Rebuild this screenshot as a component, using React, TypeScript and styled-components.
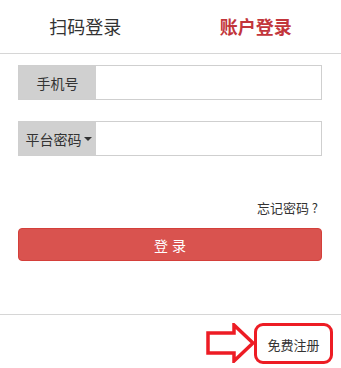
import React from "react";
import styled, { createGlobalStyle } from "styled-components";

const Global = createGlobalStyle`
  html, body { margin: 0; padding: 0; background: #fff; }
  body { font-family: "Noto Sans CJK SC", "Noto Sans", sans-serif; color: #333; }
  * { box-sizing: border-box; }
`;

const Page = styled.div`
  width: 341px;
  height: 368px;
  display: flex;
  flex-direction: column;
  background: #fff;
`;

const Tabs = styled.div`
  display: flex;
  height: 54px;
  border-bottom: 1px solid #d6d6d6;
`;

const Tab = styled.div<{ $active?: boolean }>`
  flex: 1;
  display: flex;
  align-items: center;
  justify-content: center;
  font-size: 18px;
  padding-bottom: 1px;
  font-weight: ${(p) => (p.$active ? 700 : 400)};
  color: ${(p) => (p.$active ? "#c2353b" : "#333")};
`;

const Form = styled.div`
  display: flex;
  flex-direction: column;
  padding: 11px 19px 0 18px;
`;

const Field = styled.div<{ $gap?: number }>`
  display: flex;
  height: 35px;
  margin-top: ${(p) => p.$gap ?? 0}px;
  border: 1px solid #cfcfcf;
`;

const Label = styled.div<{ $pad?: string }>`
  width: 77px;
  background: #d0d0d0;
  display: flex;
  align-items: center;
  justify-content: center;
  font-size: 14px;
  color: #333;
  padding: ${(p) => p.$pad ?? "0"};
`;

const Caret = styled.span`
  display: inline-block;
  width: 0;
  height: 0;
  margin-left: 2px;
  border-left: 4px solid transparent;
  border-right: 4px solid transparent;
  border-top: 4px solid #333;
`;

const Input = styled.input`
  flex: 1;
  border: none;
  outline: none;
  background: #fff;
  padding: 0 8px;
  font-size: 14px;
`;

const Forgot = styled.div`
  align-self: flex-end;
  margin-top: 42px;
  margin-right: 4px;
  font-size: 13px;
  line-height: 20px;
  color: #333;
  white-space: pre;
`;

const Button = styled.button`
  margin-top: 10px;
  height: 33px;
  border: 1px solid #d43f3a;
  border-radius: 4px;
  background: #d9534f;
  color: #fff;
  font-family: inherit;
  font-size: 14px;
  letter-spacing: 4px;
  padding: 0 0 0 4px;
`;

const Footer = styled.div`
  margin-top: auto;
  height: 54px;
  border-top: 1px solid #d6d6d6;
  display: flex;
  justify-content: flex-end;
  align-items: flex-start;
  padding: 8px 8px 0 0;
`;

const Arrow = styled.svg`
  width: 50px;
  height: 40px;
  margin-right: -2px;
`;

const RegisterBox = styled.div`
  width: 79px;
  height: 41px;
  border: 3px solid #ed1c24;
  border-radius: 9px;
  display: flex;
  align-items: center;
  justify-content: center;
  font-size: 13px;
  color: #333;
  padding-top: 2px;
`;

export default function App() {
  return (
    <Page>
      <Global />
      <Tabs>
        <Tab>扫码登录</Tab>
        <Tab $active>账户登录</Tab>
      </Tabs>
      <Form>
        <Field>
          <Label>手机号</Label>
          <Input />
        </Field>
        <Field $gap={21}>
          <Label $pad="0 0 0 2px">
            平台密码<Caret />
          </Label>
          <Input type="password" />
        </Field>
        <Forgot>忘记密码 ?</Forgot>
        <Button>登录</Button>
      </Form>
      <Footer>
        <Arrow viewBox="0 0 50 40">
          <polygon
            points="2,10 28,10 28,2 47,20 28,38 28,30 2,30"
            fill="none"
            stroke="#ed1c24"
            strokeWidth="3.5"
            strokeLinejoin="miter"
          />
        </Arrow>
        <RegisterBox>免费注册</RegisterBox>
      </Footer>
    </Page>
  );
}
